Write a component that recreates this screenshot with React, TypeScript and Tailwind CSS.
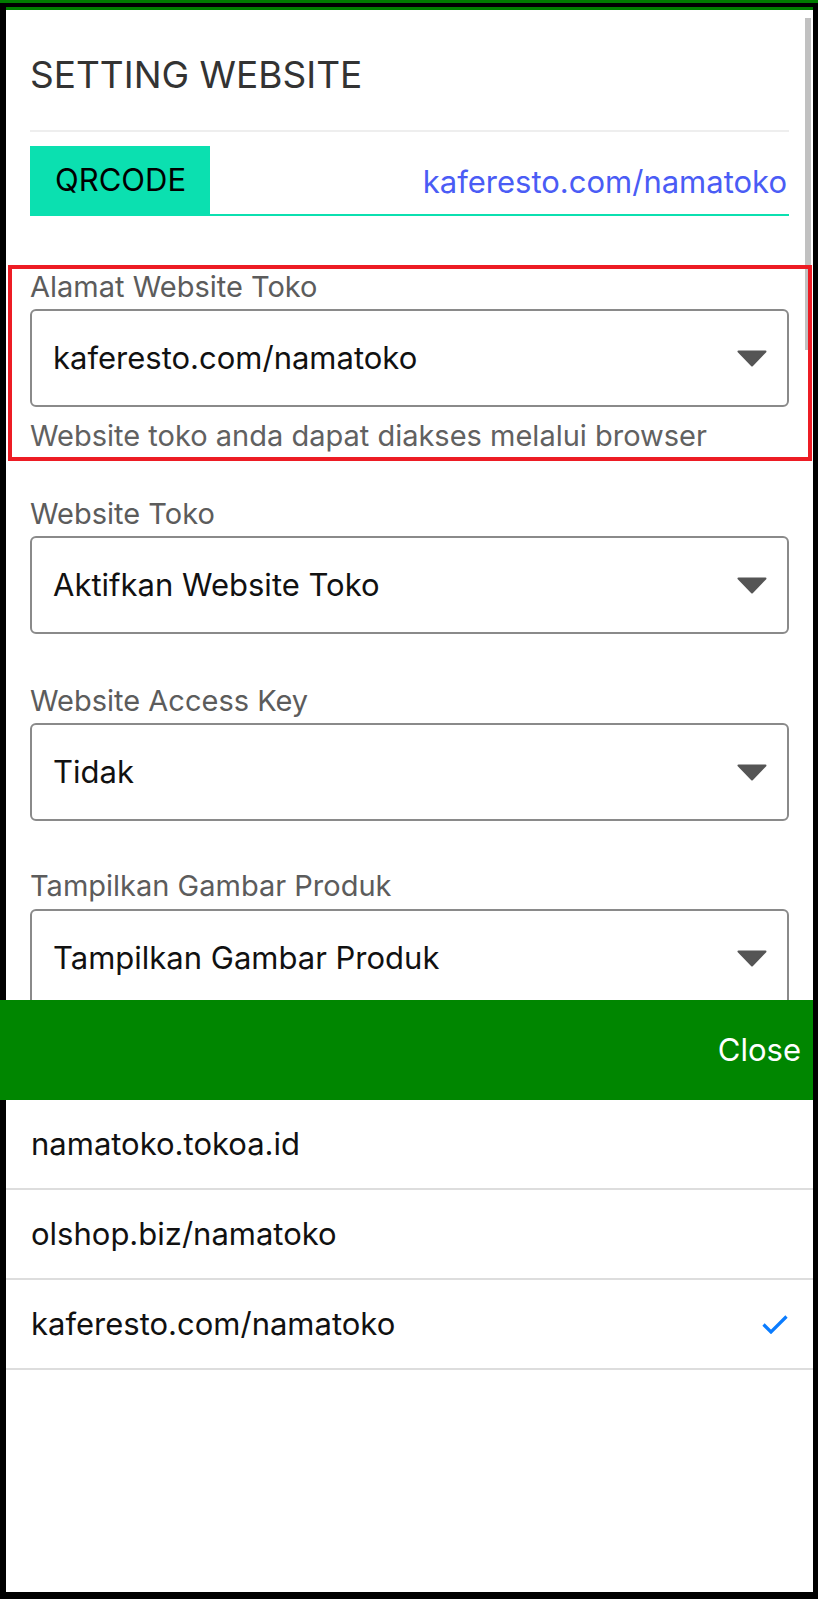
import React from "react";

const font = { fontFamily: "Inter, 'Noto Sans', sans-serif" };

// Dropdown arrow used by every select field
function Caret() {
	return (
		<svg width="30" height="17" viewBox="0 0 30 17" className="shrink-0">
			<polygon
				points="1.5,1.5 28.5,1.5 15,15.5"
				fill="#555555"
				stroke="#555555"
				strokeWidth="2"
				strokeLinejoin="round"
			/>
		</svg>
	);
}

function SelectBox({ value }: { value: string }) {
	return (
		<div className="flex h-[98px] items-center justify-between rounded-[6px] border-2 border-[#8a8a8a] pl-[21px] pr-[20px]">
			<span className="text-[31px] leading-[36px] text-[#111111]">{value}</span>
			<Caret />
		</div>
	);
}

function Label({ text, className }: { text: string; className?: string }) {
	return (
		<div className={"text-[29px] leading-[34px] text-[#5c5c5c] " + (className ?? "")}>
			{text}
		</div>
	);
}

const options = [
	{ label: "namatoko.tokoa.id", selected: false },
	{ label: "olshop.biz/namatoko", selected: false },
	{ label: "kaferesto.com/namatoko", selected: true },
];

export default function App() {
	return (
		<div className="relative flex h-[1599px] w-[818px] flex-col bg-black" style={font}>
			<div className="h-[3px] shrink-0 bg-[#007d00]" />
			<div className="flex min-h-0 flex-1 flex-col pb-[7px] pl-[6px] pr-[5px] pt-[4px]">
				<div className="flex min-h-0 flex-1 flex-col bg-white">
					<div className="h-[3px] shrink-0 bg-[#008000]" />

					{/* scrolling settings area */}
					<div className="flex h-[990px] shrink-0 overflow-hidden">
						<div className="min-w-0 flex-1 pl-[24px] pr-[15px] pt-[43px]">
							<h1 className="text-[37px] font-normal leading-[44px] text-[#333333]">
								SETTING WEBSITE
							</h1>
							<div className="mt-[33px] h-[2px] bg-[#eeeeee]" />

							<div className="mt-[14px] flex h-[70px] items-stretch justify-between border-b-2 border-[#0be0b0]">
								<div className="flex w-[180px] items-center bg-[#0be0b0] pl-[25px] text-[31px] leading-[36px] text-black">
									QRCODE
								</div>
								<div className="flex items-center pr-[2px] pt-[3px] text-[31px] leading-[36px] text-[#4a5cf5]">
									kaferesto.com/namatoko
								</div>
							</div>

							<Label text="Alamat Website Toko" className="mt-[54px]" />
							<div className="mt-[5px]">
								<SelectBox value="kaferesto.com/namatoko" />
							</div>
							<div className="mt-[12px] text-[29px] leading-[34px] text-[#616161]">
								Website toko anda dapat diakses melalui browser
							</div>

							<Label text="Website Toko" className="mt-[44px]" />
							<div className="mt-[5px]">
								<SelectBox value="Aktifkan Website Toko" />
							</div>

							<Label text="Website Access Key" className="mt-[50px]" />
							<div className="mt-[5px]">
								<SelectBox value="Tidak" />
							</div>

							<Label text="Tampilkan Gambar Produk" className="mt-[48px]" />
							<div className="mt-[6px]">
								<SelectBox value="Tampilkan Gambar Produk" />
							</div>
						</div>
						<div className="w-[9px] shrink-0 pt-[8px]">
							<div className="ml-[1px] h-[332px] w-[6px] bg-[#c1c1c1]" />
						</div>
					</div>

					{/* picker sheet */}
					<div className="-ml-[6px] flex h-[100px] shrink-0 items-center justify-end bg-[#008600] pr-[12px]">
						<span className="text-[31px] leading-[36px] text-white">Close</span>
					</div>
					<div className="flex flex-col">
						{options.map((o) => (
							<div
								key={o.label}
								className="flex h-[90px] items-center justify-between border-b-2 border-[#dddddd] pl-[25px] pr-[25px]"
							>
								<span className="text-[31px] leading-[36px] text-[#111111]">{o.label}</span>
								{o.selected && (
									<svg width="26" height="19" viewBox="0 0 26 19">
										<polyline
											points="1.5,9.5 9,17 24.5,1.5"
											fill="none"
											stroke="#0a7cff"
											strokeWidth="3.2"
										/>
									</svg>
								)}
							</div>
						))}
					</div>
				</div>
			</div>

			{/* annotation frame */}
			<div className="pointer-events-none absolute left-[8px] top-[265px] h-[196px] w-[804px] border-4 border-[#ed1c24]" />
		</div>
	);
}
